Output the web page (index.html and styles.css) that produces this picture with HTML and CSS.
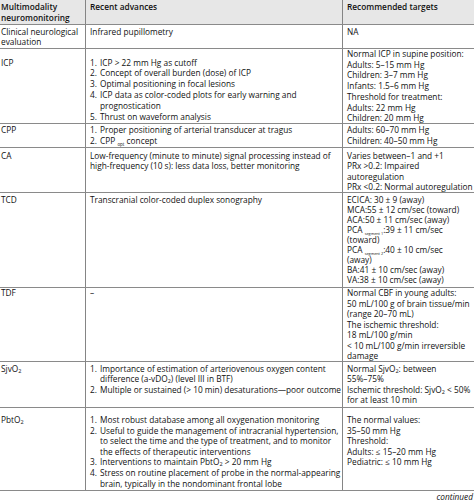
FILE: index.html
```html
<!DOCTYPE html>
<html lang="en">
<head>
<meta charset="utf-8">
<title>Multimodality neuromonitoring</title>
<link rel="stylesheet" href="styles.css">
</head>
<body>
<div class="table">
  <div class="row hdr">
    <div class="cell c1">Multimodality<br>neuromonitoring</div>
    <div class="cell c2">Recent advances</div>
    <div class="cell c3">Recommended targets</div>
  </div>
  <div class="row r-clin">
    <div class="cell c1">Clinical neurological<br>evaluation</div>
    <div class="cell c2">Infrared pupillometry</div>
    <div class="cell c3">NA</div>
  </div>
  <div class="row r-icp">
    <div class="cell c1 low">ICP</div>
    <div class="cell c2 low">
      <ol class="list">
        <li><span class="n">1.</span><span>ICP &gt; 22 mm Hg as cutoff</span></li>
        <li><span class="n">2.</span><span>Concept of overall burden (dose) of ICP</span></li>
        <li><span class="n">3.</span><span>Optimal positioning in focal lesions</span></li>
        <li><span class="n">4.</span><span>ICP data as color-coded plots for early warning and<br>prognostication</span></li>
        <li><span class="n">5.</span><span>Thrust on waveform analysis</span></li>
      </ol>
    </div>
    <div class="cell c3 high">Normal ICP in supine position:<br>Adults: 5–15 mm Hg<br>Children: 3–7 mm Hg<br>Infants: 1.5–6 mm Hg<br>Threshold for treatment:<br>Adults: 22 mm Hg<br>Children: 20 mm Hg</div>
  </div>
  <div class="row r-cpp">
    <div class="cell c1">CPP</div>
    <div class="cell c2">
      <ol class="list">
        <li><span class="n">1.</span><span>Proper positioning of arterial transducer at tragus</span></li>
        <li><span class="n">2.</span><span>CPP <sub class="tiny">opt</sub> concept</span></li>
      </ol>
    </div>
    <div class="cell c3">Adults: 60–70 mm Hg<br>Children: 40–50 mm Hg</div>
  </div>
  <div class="row r-ca">
    <div class="cell c1">CA</div>
    <div class="cell c2">Low-frequency (minute to minute) signal processing instead of<br>high-frequency (10 s): less data loss, better monitoring</div>
    <div class="cell c3">Varies between–1 and +1<br>PRx &gt;0.2: Impaired<br>autoregulation<br>PRx &lt;0.2: Normal autoregulation</div>
  </div>
  <div class="row r-tcd">
    <div class="cell c1">TCD</div>
    <div class="cell c2">Transcranial color-coded duplex sonography</div>
    <div class="cell c3">ECICA: 30 ± 9 (away)<br>MCA:55 ± 12 cm/sec (toward)<br>ACA:50 ± 11 cm/sec (away)<br>PCA <sub class="seg">segment 1</sub>:39 ± 11 cm/sec<br>(toward)<br>PCA <sub class="seg">segment 2</sub>:40 ± 10 cm/sec<br>(away)<br>BA:41 ± 10 cm/sec (away)<br>VA:38 ± 10 cm/sec (away)</div>
  </div>
  <div class="row r-tdf">
    <div class="cell c1">TDF</div>
    <div class="cell c2">–</div>
    <div class="cell c3">Normal CBF in young adults:<br>50 mL/100 g of brain tissue/min<br>(range 20–70 mL)<br>The ischemic threshold:<br>18 mL/100 g/min<br>&lt; 10 mL/100 g/min irreversible<br>damage</div>
  </div>
  <div class="row r-sjv">
    <div class="cell c1">SjvO<sub>2</sub></div>
    <div class="cell c2">
      <ol class="list">
        <li><span class="n">1.</span><span>Importance of estimation of arteriovenous oxygen content<br>difference (a-vDO<sub>2</sub>) (level III in BTF)</span></li>
        <li><span class="n">2.</span><span>Multiple or sustained (&gt; 10 min) desaturations—poor outcome</span></li>
      </ol>
    </div>
    <div class="cell c3">Normal SjvO<sub>2</sub>: between<br>55%–75%<br>Ischemic threshold: SjvO<sub>2</sub> &lt; 50%<br>for at least 10 min</div>
  </div>
  <div class="row r-pbt">
    <div class="cell c1">PbtO<sub>2</sub></div>
    <div class="cell c2">
      <ol class="list">
        <li><span class="n">1.</span><span>Most robust database among all oxygenation monitoring</span></li>
        <li><span class="n">2.</span><span>Useful to guide the management of intracranial hypertension,<br>to select the time and the type of treatment, and to monitor<br>the effects of therapeutic interventions</span></li>
        <li><span class="n">3.</span><span>Interventions to maintain PbtO<sub>2</sub> &gt; 20 mm Hg</span></li>
        <li><span class="n">4.</span><span>Stress on routine placement of probe in the normal-appearing<br>brain, typically in the nondominant frontal lobe</span></li>
      </ol>
    </div>
    <div class="cell c3">The normal values:<br>35–50 mm Hg<br>Threshold:<br>Adults: ≤ 15–20 mm Hg<br>Pediatric: ≤ 10 mm Hg</div>
  </div>
  <div class="foot">continued</div>
</div>
</body>
</html>
```

FILE: styles.css
```css
html, body {
  margin: 0;
  padding: 0;
  background: #ffffff;
}

body {
  font-family: "Open Sans", "Noto Sans", sans-serif;
  font-size: 8.3px;
  font-weight: 500;
  line-height: 10.6px;
  color: #111111;
  width: 474px;
  height: 502px;
  overflow: hidden;
}

.table {
  width: 474px;
  display: flex;
  flex-direction: column;
}

.row {
  display: grid;
  grid-template-columns: 85px 257px 132px;
  box-sizing: border-box;
  border-bottom: 1px solid #8a8a8a;
}

.cell {
  box-sizing: border-box;
  white-space: nowrap;
}

.c1 {
  padding-left: 1px;
}

.c2,
.c3 {
  border-left: 1px solid #858585;
  padding-left: 4px;
}

.hdr {
  height: 25px;
  background: #e7e7e7;
  font-weight: 600;
  line-height: 11.8px;
}

.hdr .cell {
  padding-top: 0.5px;
}

.r-clin { height: 24px; }
.r-clin .cell { padding-top: 1.5px; line-height: 10.2px; }

.r-icp { height: 75px; }
.r-icp .low { padding-top: 8.5px; line-height: 10.9px; }
.r-icp .high { padding-top: 0px; line-height: 10.7px; }

.r-cpp { height: 24px; }
.r-cpp .cell { padding-top: 1px; }

.r-ca { height: 45px; }
.r-ca .cell { padding-top: 3px; line-height: 10.3px; }

.r-tcd { height: 95px; }
.r-tcd .cell { padding-top: 1.5px; line-height: 10.1px; }

.r-tdf { height: 74px; }
.r-tdf .cell { padding-top: 0px; line-height: 10.5px; }

.r-sjv { height: 46px; }
.r-sjv .cell { padding-top: 1.5px; }

.r-pbt { height: 83px; }
.r-pbt .cell { padding-top: 7px; }

.list {
  list-style: none;
  margin: 0;
  padding: 0;
}

.list li {
  display: grid;
  grid-template-columns: 10px auto;
}

sub {
  font-size: 5.5px;
  line-height: 0;
  vertical-align: -1px;
}

sub.tiny {
  font-size: 4.5px;
  vertical-align: -2px;
}

sub.seg {
  font-size: 3.8px;
  vertical-align: -1.5px;
}

.foot {
  text-align: right;
  font-style: italic;
  line-height: 9.5px;
  padding-top: 1px;
  padding-right: 1px;
}
```
